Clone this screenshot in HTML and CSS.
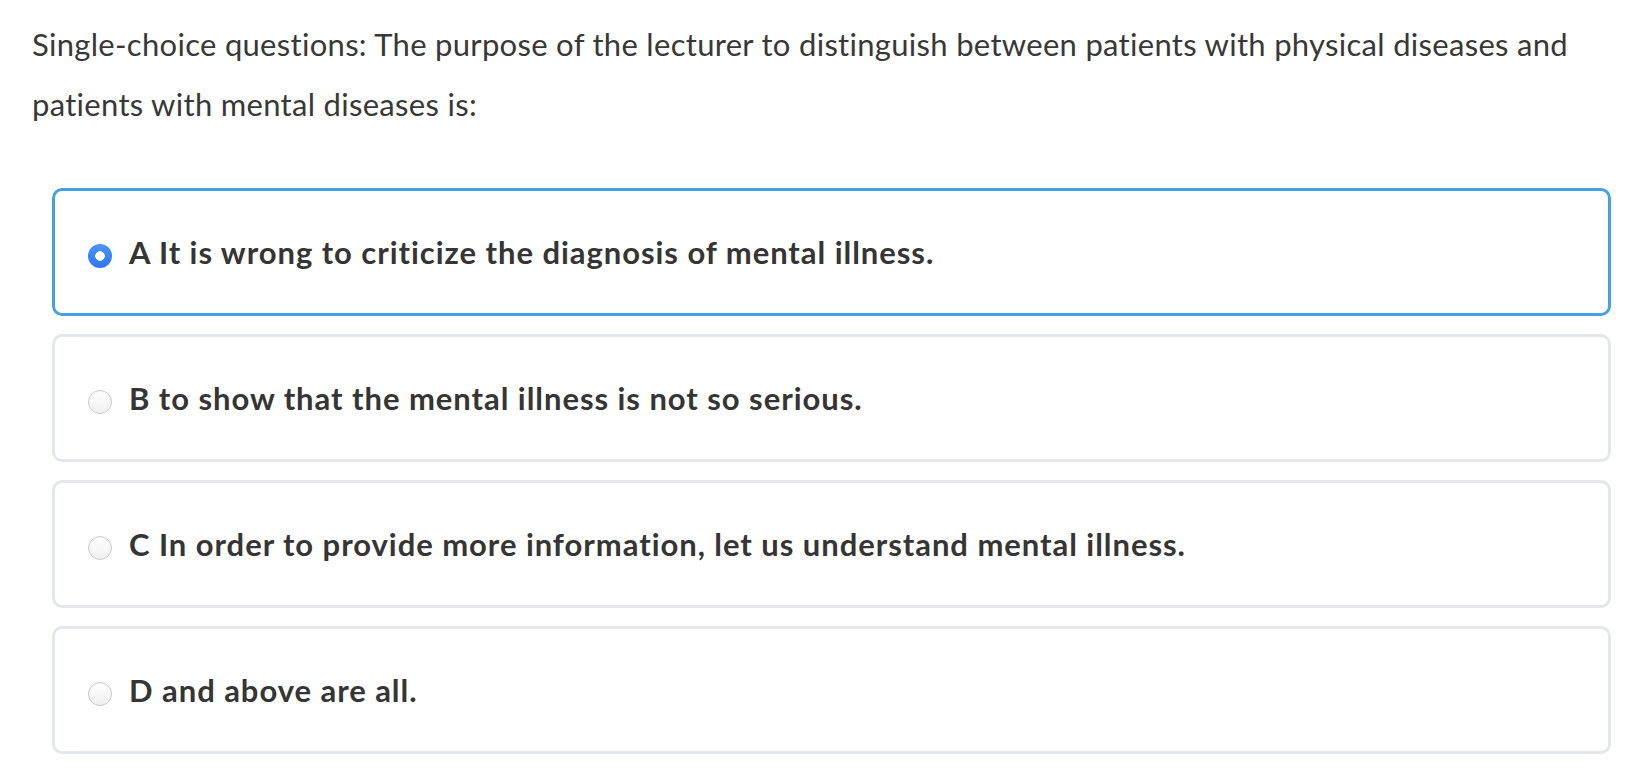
FILE: index.html
```html
<!DOCTYPE html>
<html lang="en">
<head>
<meta charset="utf-8">
<title>Single-choice question</title>
<link rel="stylesheet" href="styles.css">
</head>
<body>
<div class="page">
  <p class="question">Single-choice questions: The purpose of the lecturer to distinguish between patients with physical diseases and patients with mental diseases is:</p>
  <div class="options">
    <label class="option selected">
      <span class="radio checked"></span>
      <span class="label">A It is wrong to criticize the diagnosis of mental illness.</span>
    </label>
    <label class="option">
      <span class="radio"></span>
      <span class="label">B to show that the mental illness is not so serious.</span>
    </label>
    <label class="option">
      <span class="radio"></span>
      <span class="label">C In order to provide more information, let us understand mental illness.</span>
    </label>
    <label class="option">
      <span class="radio"></span>
      <span class="label">D and above are all.</span>
    </label>
  </div>
</div>
</body>
</html>
```

FILE: styles.css
```css
* { box-sizing: border-box; }

html, body {
  margin: 0;
  padding: 0;
  background: #ffffff;
}

body {
  font-family: Lato, "Open Sans", "Liberation Sans", sans-serif;
  color: #333333;
  font-variant-ligatures: none;
}

.page {
  padding: 14px 25px 0 32px;
}

.question {
  margin: 0;
  font-size: 31px;
  line-height: 60px;
  font-weight: 400;
  letter-spacing: 0.3px;
  color: #383838;
}

.options {
  margin: 54px 0 0 20px;
  display: flex;
  flex-direction: column;
  gap: 18px;
}

.option {
  display: flex;
  align-items: center;
  height: 128px;
  padding: 0 20px 0 33px;
  border: 3px solid #e3e6eb;
  border-radius: 10px;
  background: #ffffff;
}

.option.selected {
  border-color: #47a1e1;
}

.radio {
  flex: none;
  width: 24px;
  height: 24px;
  margin-top: 8px;
  margin-right: 17px;
  border-radius: 50%;
  border: 1px solid #c9c9c9;
  background: linear-gradient(#ffffff, #f0f0f0);
  box-shadow: inset 0 1px 1px rgba(0, 0, 0, 0.04);
}

.radio.checked {
  border: none;
  background: radial-gradient(circle at center, #ffffff 0, #ffffff 4.5px, transparent 5px),
              linear-gradient(#4c95f7, #2f74f0);
}

.label {
  font-size: 31px;
  font-weight: 700;
  line-height: 36px;
  letter-spacing: 0.95px;
  color: #353535;
}
```
